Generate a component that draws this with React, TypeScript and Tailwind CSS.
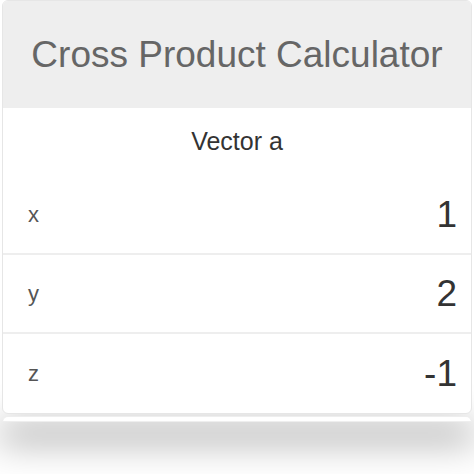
const rows = [
  { label: "x", value: "1" },
  { label: "y", value: "2" },
  { label: "z", value: "-1" },
];

export default function App() {
  return (
    <div className="w-[474px] h-[474px] bg-white overflow-hidden font-['Liberation_Sans',Arial,sans-serif] px-[2px]">
      <div className="relative z-10 rounded-[6px] border border-[#e6e6e6] overflow-hidden bg-white">
        <div className="h-[107px] bg-[#eeeeee] flex items-center justify-center">
          <h1 className="text-[37px] text-[#666666] leading-none">Cross Product Calculator</h1>
        </div>
        <div className="h-[68px] flex items-center justify-center text-[25px] text-[#333333]">Vector a</div>
        {rows.map((row, i) => (
          <div
            key={row.label}
            className={
              "h-[79px] flex items-center justify-between pl-[25px] pr-[14px]" +
              (i < rows.length - 1 ? " border-b-2 border-[#eeeeee]" : "")
            }
          >
            <span className="text-[22px] text-[#555555]">{row.label}</span>
            <span className="text-[37px] text-[#333333]">{row.value}</span>
          </div>
        ))}
      </div>
      <div className="mt-[2px] h-[6px] rounded-t-[6px] bg-white border border-[#eeeeee] shadow-[0_14px_36px_4px_rgba(0,0,0,0.5)]" />
    </div>
  );
}
